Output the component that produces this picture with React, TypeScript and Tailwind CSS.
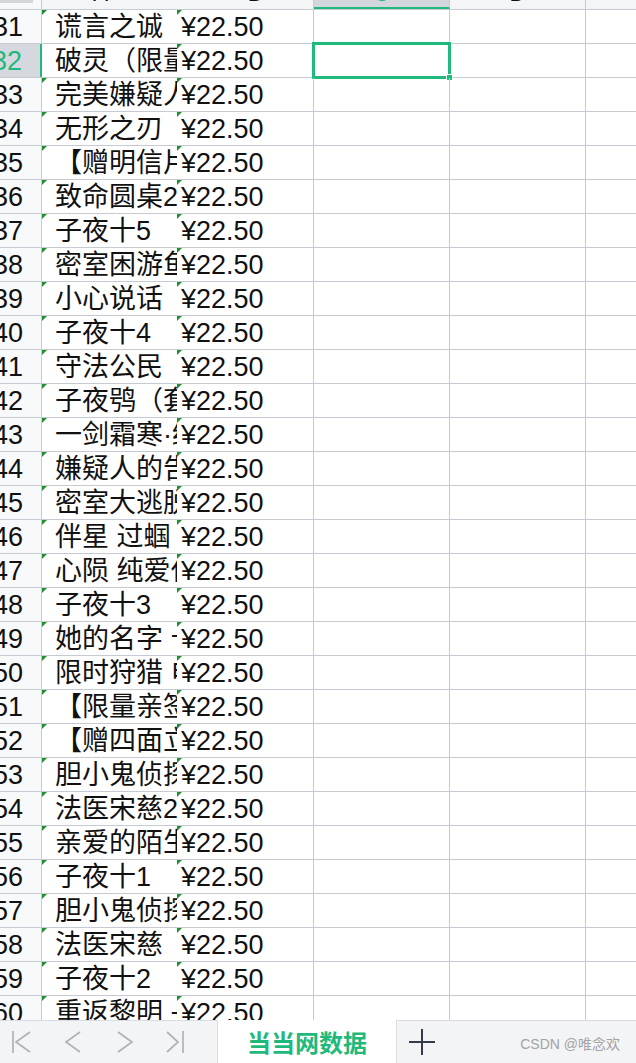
import React from "react";

const rows: [number, string][] = [
  [31, "谎言之诚 【"],
  [32, "破灵（限量"],
  [33, "完美嫌疑人"],
  [34, "无形之刃"],
  [35, "【赠明信片"],
  [36, "致命圆桌2"],
  [37, "子夜十5"],
  [38, "密室困游鱼"],
  [39, "小心说话"],
  [40, "子夜十4"],
  [41, "守法公民"],
  [42, "子夜鸮（套"],
  [43, "一剑霜寒·终"],
  [44, "嫌疑人的告白"],
  [45, "密室大逃脱"],
  [46, "伴星 过蝈"],
  [47, "心陨 纯爱仆"],
  [48, "子夜十3"],
  [49, "她的名字 十"],
  [50, "限时狩猎 电"],
  [51, "【限量亲签"],
  [52, "【赠四面立"],
  [53, "胆小鬼侦探"],
  [54, "法医宋慈2"],
  [55, "亲爱的陌生人"],
  [56, "子夜十1"],
  [57, "胆小鬼侦探"],
  [58, "法医宋慈"],
  [59, "子夜十2"],
  [60, "重返黎明 +"],
];

const SELECTED_ROW = 32;

// little green "number stored as text" marker
const Flag = () => (
  <div className="absolute left-0 top-0 w-0 h-0 border-t-[5px] border-r-[5px] border-t-[#1f8f2f] border-r-transparent" />
);

const Chevron = ({ d }: { d: string }) => (
  <svg viewBox="0 0 24 24" className="w-[24px] h-[24px]" fill="none" stroke="#b2b2b2" strokeWidth="1.7">
    <path d={d} />
  </svg>
);

const App = () => {
  return (
    <div className="w-full h-screen flex flex-col bg-white overflow-hidden font-['Liberation_Sans','Noto_Sans_CJK_SC',sans-serif] text-[#111]">
      {/* Sheet */}
      <div className="flex-1 overflow-hidden">
        {/* Column header (mostly scrolled away) */}
        <div className="flex h-[10px] border-b border-[#c6cad3] overflow-hidden">
          <div className="w-[42px] shrink-0 border-r border-[#c6cad3] bg-[#f7f8fa]">
            <div className="w-[33px] h-[3px] bg-[#d4d6da]" />
          </div>
          <div className="w-[135px] shrink-0 bg-[#f4f5f7] flex justify-center">
            <span className="-mt-[17px] text-[22px] leading-none pr-[18px]">A</span>
          </div>
          <div className="w-[137px] shrink-0 bg-[#f4f5f7] border-r border-[#c6cad3] flex justify-center">
            <span className="-mt-[17px] text-[22px] leading-none pl-[20px]">B</span>
          </div>
          <div className="w-[136px] shrink-0 bg-[#d3d6dc] border-r border-[#c6cad3] border-b-2 border-b-[#1fb97c] flex justify-center">
            <span className="-mt-[17px] text-[22px] leading-none text-[#1fb97c]">C</span>
          </div>
          <div className="w-[136px] shrink-0 bg-[#f4f5f7] border-r border-[#c6cad3] flex justify-center">
            <span className="-mt-[17px] text-[22px] leading-none">D</span>
          </div>
          <div className="flex-1 bg-[#f4f5f7]" />
        </div>

        {rows.map(([n, title]) => {
          const sel = n === SELECTED_ROW;
          return (
            <div key={n} className="flex h-[34px] border-b border-[#c6cad3]">
              <div
                className={`w-[42px] shrink-0 flex items-center justify-end pr-[18px] pt-[2px] overflow-hidden text-[27px] leading-none ${
                  sel
                    ? "bg-[#d5d8de] text-[#1fb97c] border-r-2 border-[#1fb97c]"
                    : "bg-[#f8f9fa] border-r border-[#c6cad3]"
                }`}
              >
                {n}
              </div>
              <div className="relative w-[135px] shrink-0 flex items-center pl-[13px] pt-[2px] overflow-hidden whitespace-nowrap text-[27px] leading-none">
                {!sel && <Flag />}
                {title}
              </div>
              <div className="relative w-[137px] shrink-0 flex items-center pl-[4px] pt-[2px] border-r border-[#c6cad3] whitespace-nowrap text-[27px] leading-none">
                <Flag />
                ¥22.50
              </div>
              <div className="relative w-[136px] shrink-0 border-r border-[#c6cad3]">
                {sel && (
                  <>
                    <div className="absolute -left-[2px] -top-[2px] -right-[2px] -bottom-[2px] border-[3px] border-[#1fb97c]" />
                    <div className="absolute -right-[4px] -bottom-[4px] w-[7px] h-[7px] bg-[#1fb97c] border border-white" />
                  </>
                )}
              </div>
              <div className="w-[136px] shrink-0 border-r border-[#c6cad3]" />
              <div className="flex-1" />
            </div>
          );
        })}
      </div>

      {/* Sheet tabs */}
      <div className="h-[43px] shrink-0 flex items-center bg-[#f3f4f6] border-t border-[#d9dce2]">
        <div className="ml-[9px]">
          <Chevron d="M4 1V23M21 2L7 12L21 22" />
        </div>
        <div className="ml-[28px]">
          <Chevron d="M19 2L5 12L19 22" />
        </div>
        <div className="ml-[28px]">
          <Chevron d="M5 2L19 12L5 22" />
        </div>
        <div className="ml-[26px]">
          <Chevron d="M4 2L15 12L4 22M20 1V23" />
        </div>
        <div className="ml-[30px] -mt-px h-[44px] w-[180px] bg-white border-x border-[#dadde3] flex items-center justify-center">
          <span className="text-[24px] font-bold text-[#1fb97c] font-['Noto_Sans_CJK_SC',sans-serif]">当当网数据</span>
        </div>
        <svg viewBox="0 0 26 26" className="ml-[12px] w-[26px] h-[26px]" fill="none" stroke="#363b4a" strokeWidth="2">
          <path d="M13 0V26M0 13H26" />
        </svg>
        <span className="ml-auto mr-[16px] mt-[4px] text-[14px] text-[#a3a3a3]">CSDN @唯念欢</span>
      </div>
    </div>
  );
};

export default App;
